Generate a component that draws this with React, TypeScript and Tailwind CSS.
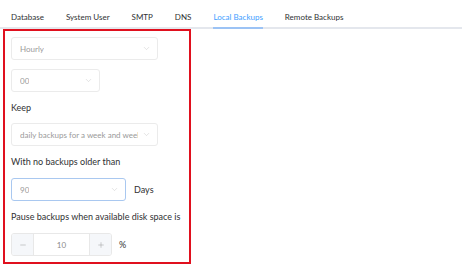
import { ChevronDown, Minus, Plus } from 'lucide-react';

const tabs = ['Database', 'System User', 'SMTP', 'DNS', 'Local Backups', 'Remote Backups'];

function Select({ value, width, focused }: { value: string; width: string; focused?: boolean }) {
  return (
    <div
      className={`flex h-[23px] items-center justify-between rounded-[3px] border bg-white pl-[8px] pr-[6px] ${width} ${
        focused ? 'border-[#a9c8f0]' : 'border-[#ebebeb]'
      }`}
    >
      <span className="overflow-hidden whitespace-nowrap text-[8px] text-[#9a9a9a]">{value}</span>
      <ChevronDown className="ml-1 h-[9px] w-[9px] shrink-0 text-[#cfcfcf]" strokeWidth={1.5} />
    </div>
  );
}

function Label({ children }: { children: React.ReactNode }) {
  return <div className="mt-[8px] h-[16px] whitespace-nowrap text-[9px] leading-[16px] text-[#303133]">{children}</div>;
}

export default function App() {
  return (
    <div className="h-[268px] w-[474px] bg-white" style={{ fontFamily: 'Lato, "Open Sans", sans-serif' }}>
      {/* Tabs */}
      <div className="relative flex h-[29px] w-[462px] items-center border-b-2 border-[#e4e7ed] pl-[11px] pt-[6px]">
        {tabs.map((t) => {
          const active = t === 'Local Backups';
          return (
            <div key={t} className="relative mr-[22px] flex h-full items-center">
              <span className={`text-[8px] ${active ? 'text-[#409eff]' : 'text-[#303133]'}`}>{t}</span>
              {active && <div className="absolute bottom-[-2px] left-0 right-0 h-[2px] bg-[#9cc3f5]" />}
            </div>
          );
        })}
      </div>

      {/* Backup settings */}
      <div className="ml-[3px] w-[188px] border-2 border-[#e0101e] px-[6px] pb-[6px] pt-[6px]">
        <Select value="Hourly" width="w-[147px]" />
        <div className="mt-[9px]">
          <Select value="00" width="w-[89px]" />
        </div>
        <Label>Keep</Label>
        <div className="mt-[7px]">
          <Select value="daily backups for a week and weekly backups" width="w-[147px]" />
        </div>
        <Label>With no backups older than</Label>
        <div className="mt-[8px] flex items-center">
          <Select value="90" width="w-[115px]" focused />
          <span className="ml-[8px] text-[9px] text-[#303133]">Days</span>
        </div>
        <Label>Pause backups when available disk space is</Label>
        <div className="mt-[8px] flex items-center">
          <div className="flex h-[23px] w-[101px] overflow-hidden rounded-[3px] border border-[#e8e8e8]">
            <div className="flex w-[22px] items-center justify-center border-r border-[#e8e8e8] bg-[#f5f7fa]">
              <Minus className="h-[8px] w-[8px] text-[#9a9a9a]" strokeWidth={1.5} />
            </div>
            <div className="flex flex-1 items-center justify-center text-[8px] text-[#8a8a8a]">10</div>
            <div className="flex w-[22px] items-center justify-center border-l border-[#e8e8e8] bg-[#f5f7fa]">
              <Plus className="h-[8px] w-[8px] text-[#9a9a9a]" strokeWidth={1.5} />
            </div>
          </div>
          <span className="ml-[7px] text-[9px] text-[#303133]">%</span>
        </div>
      </div>
    </div>
  );
}
